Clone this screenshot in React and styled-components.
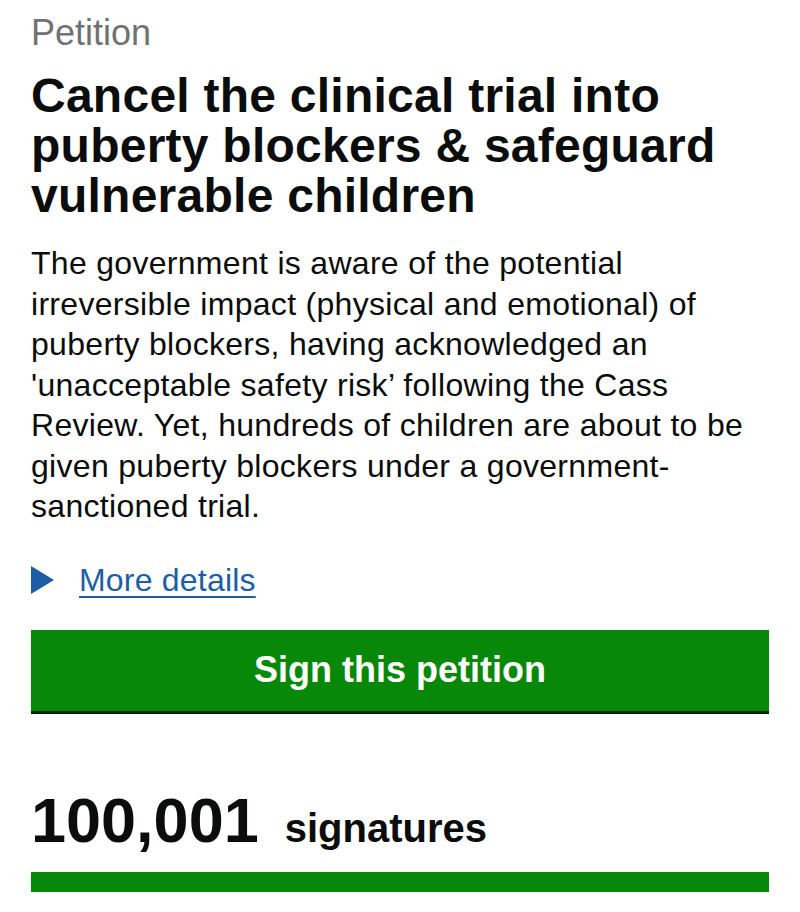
import React from 'react';
import styled, { createGlobalStyle } from 'styled-components';

const GlobalStyle = createGlobalStyle`
  html, body {
    margin: 0;
    padding: 0;
    background: #ffffff;
  }
  body {
    font-family: "Liberation Sans", Arial, Helvetica, sans-serif;
    color: #0b0c0c;
  }
`;

const Page = styled.main`
  padding: 13px 31px 20px 31px;
  display: flex;
  flex-direction: column;
`;

const Caption = styled.span`
  font-size: 36px;
  line-height: 40px;
  color: #6f7173;
`;

const Title = styled.h1`
  margin: 18px 0 0 0;
  font-size: 48px;
  line-height: 50px;
  font-weight: 700;
  letter-spacing: 0.25px;
  color: #0b0c0c;
`;

const Summary = styled.p`
  margin: 22px 0 0 0;
  font-size: 32px;
  line-height: 40.5px;
  letter-spacing: 0.3px;
  color: #0b0c0c;
`;

const Details = styled.div`
  margin-top: 33px;
  display: flex;
  align-items: center;
  gap: 25px;
  height: 40px;
`;

const DetailsLink = styled.a`
  font-size: 32px;
  line-height: 40px;
  letter-spacing: 0.2px;
  color: #1b5ea6;
  text-decoration: underline;
  text-decoration-thickness: 2px;
  text-underline-offset: 5px;
  cursor: pointer;
`;

const SignButton = styled.button`
  margin-top: 30px;
  height: 81px;
  width: 100%;
  border: none;
  border-radius: 0;
  background: #088808;
  box-shadow: 0 3px 0 #002a00;
  color: #ffffff;
  font-family: inherit;
  font-size: 36px;
  font-weight: 700;
  display: flex;
  align-items: center;
  justify-content: center;
  cursor: pointer;
`;

const Count = styled.div`
  margin-top: 77px;
  display: flex;
  align-items: baseline;
  gap: 26px;
  line-height: 64px;
`;

const CountNumber = styled.span`
  font-size: 63px;
  font-weight: 700;
`;

const CountLabel = styled.span`
  font-size: 40px;
  font-weight: 700;
`;

const Track = styled.div`
  margin-top: 12px;
  height: 20px;
  background: #e6efe6;
`;

const Fill = styled.div`
  height: 100%;
  background: #088808;
`;

function Arrow() {
  return (
    <svg width="23" height="28" viewBox="0 0 23 28" aria-hidden="true">
      <polygon points="0,0 23,14 0,28" fill="#1b5ea6" />
    </svg>
  );
}

export default function App() {
  const signatures = 100001;
  const target = 100000;
  const pct = Math.min(100, (signatures / target) * 100);
  return (
    <>
      <GlobalStyle />
      <Page>
        <Caption>Petition</Caption>
        <Title>Cancel the clinical trial into puberty blockers &amp; safeguard vulnerable children</Title>
        <Summary>
          The government is aware of the potential irreversible impact (physical and emotional) of
          puberty blockers, having acknowledged an 'unacceptable safety risk’ following the Cass
          Review. Yet, hundreds of children are about to be given puberty blockers under a
          government-sanctioned trial.
        </Summary>
        <Details>
          <Arrow />
          <DetailsLink>More details</DetailsLink>
        </Details>
        <SignButton>Sign this petition</SignButton>
        <Count>
          <CountNumber>{signatures.toLocaleString('en-GB')}</CountNumber>
          <CountLabel>signatures</CountLabel>
        </Count>
        <Track>
          <Fill style={{ width: `${pct}%` }} />
        </Track>
      </Page>
    </>
  );
}
